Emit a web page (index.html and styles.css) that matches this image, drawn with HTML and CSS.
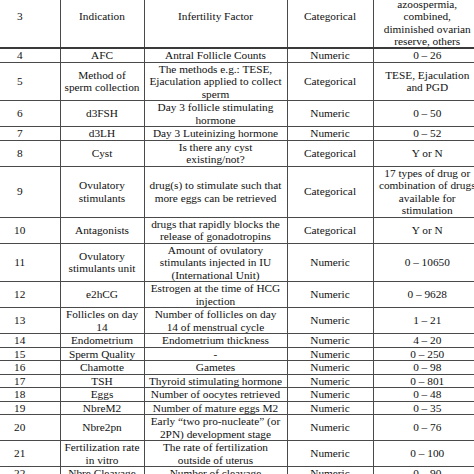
FILE: index.html
```html
<!DOCTYPE html>
<html>
<head>
<meta charset="utf-8">
<link rel="stylesheet" href="styles.css">
</head>
<body>
<div class="frame">
<table class="data">
<colgroup>
<col class="c1"><col class="c2"><col class="c3"><col class="c4"><col class="c5">
</colgroup>
<tbody>
<tr class="r3">
<td>3</td><td>Indication</td><td>Infertility Factor</td><td>Categorical</td>
<td class="multi">azoospermia,<br>combined,<br>diminished ovarian<br>reserve, others</td>
</tr>
<tr><td>4</td><td>AFC</td><td>Antral Follicle Counts</td><td>Numeric</td><td>0 – 26</td></tr>
<tr><td>5</td><td>Method of<br>sperm collection</td><td>The methods e.g.: TESE,<br>Ejaculation applied to collect<br>sperm</td><td>Categorical</td><td>TESE, Ejaculation<br>and PGD</td></tr>
<tr><td>6</td><td>d3FSH</td><td>Day 3 follicle stimulating<br>hormone</td><td>Numeric</td><td>0 – 50</td></tr>
<tr><td>7</td><td>d3LH</td><td>Day 3 Luteinizing hormone</td><td>Numeric</td><td>0 – 52</td></tr>
<tr><td>8</td><td>Cyst</td><td>Is there any cyst<br>existing/not?</td><td>Categorical</td><td>Y or N</td></tr>
<tr><td>9</td><td>Ovulatory<br>stimulants</td><td>drug(s) to stimulate such that<br>more eggs can be retrieved</td><td>Categorical</td><td>17 types of drug or<br>combination of drugs<br>available for<br>stimulation</td></tr>
<tr><td>10</td><td>Antagonists</td><td>drugs that rapidly blocks the<br>release of gonadotropins</td><td>Categorical</td><td>Y or N</td></tr>
<tr><td>11</td><td>Ovulatory<br>stimulants unit</td><td>Amount of ovulatory<br>stimulants injected in IU<br>(International Unit)</td><td>Numeric</td><td>0 – 10650</td></tr>
<tr><td>12</td><td>e2hCG</td><td>Estrogen at the time of HCG<br>injection</td><td>Numeric</td><td>0 – 9628</td></tr>
<tr><td>13</td><td>Follicles on day<br>14</td><td>Number of follicles on day<br>14 of menstrual cycle</td><td>Numeric</td><td>1 – 21</td></tr>
<tr><td>14</td><td>Endometrium</td><td>Endometrium thickness</td><td>Numeric</td><td>4 – 20</td></tr>
<tr><td>15</td><td>Sperm Quality</td><td>-</td><td>Numeric</td><td>0 – 250</td></tr>
<tr><td>16</td><td>Chamotte</td><td>Gametes</td><td>Numeric</td><td>0 – 98</td></tr>
<tr><td>17</td><td>TSH</td><td>Thyroid stimulating hormone</td><td>Numeric</td><td>0 – 801</td></tr>
<tr><td>18</td><td>Eggs</td><td>Number of oocytes retrieved</td><td>Numeric</td><td>0 – 48</td></tr>
<tr><td>19</td><td>NbreM2</td><td>Number of mature eggs M2</td><td>Numeric</td><td>0 – 35</td></tr>
<tr><td>20</td><td>Nbre2pn</td><td>Early “two pro-nucleate” (or<br>2PN) development stage</td><td>Numeric</td><td>0 – 76</td></tr>
<tr><td>21</td><td>Fertilization rate<br>in vitro</td><td>The rate of fertilization<br>outside of uterus</td><td>Numeric</td><td>0 – 100</td></tr>
<tr><td>22</td><td>Nbre Cleavage</td><td>Number of cleavage</td><td>Numeric</td><td>0 – 90</td></tr>
</tbody>
</table>
</div>
</body>
</html>
```
FILE: styles.css
```css
html, body {
  margin: 0;
  padding: 0;
  background: #ffffff;
}
.frame {
  width: 474px;
  height: 474px;
  overflow: hidden;
}
.data {
  border-collapse: collapse;
  table-layout: fixed;
  width: 501px;
  margin-left: -20px;
  margin-top: -2px;
  font-family: "Liberation Serif", "Times New Roman", serif;
  font-size: 11.3px;
  line-height: 12.5px;
  color: #111111;
}
.c1 { width: 80px; }
.c2 { width: 84px; }
.c3 { width: 143px; }
.c4 { width: 86px; }
.c5 { width: 108px; }
.data td {
  border: 1px solid #4a4a4a;
  padding: 0;
  text-align: center;
  vertical-align: middle;
  white-space: nowrap;
}
.data td:first-child {
  border-left: none;
}
.data td:last-child {
  border-right: none;
}
.r3 td {
  border-top: none;
  border-bottom: 2px solid #3a3a3a;
  vertical-align: top;
  padding-top: 12px;
}
.r3 td.multi {
  vertical-align: bottom;
  padding-top: 0;
  line-height: 12.3px;
}
```
